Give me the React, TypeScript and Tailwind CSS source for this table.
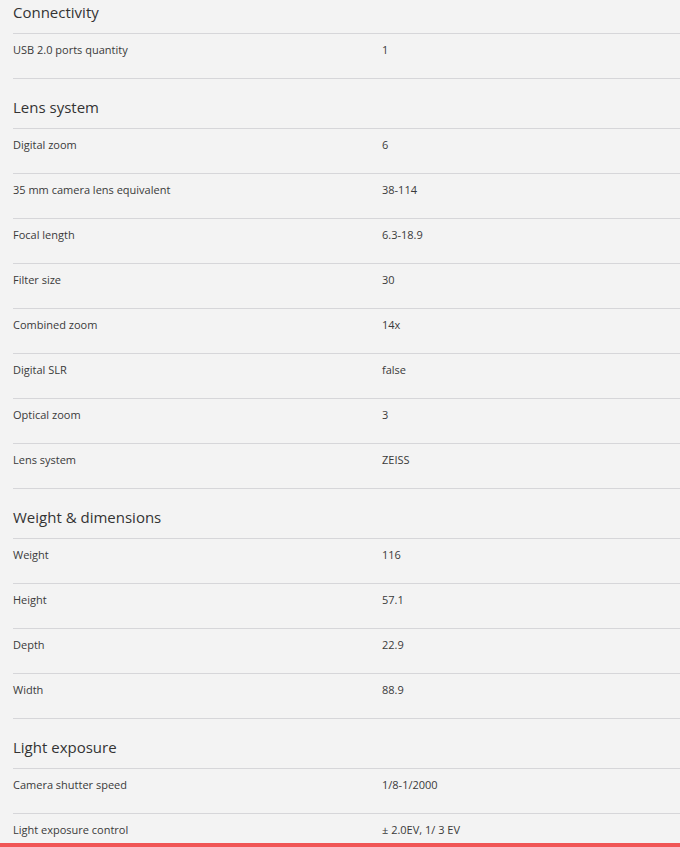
const sections: { title: string; rows: [string, string][] }[] = [
  { title: "Connectivity", rows: [["USB 2.0 ports quantity", "1"]] },
  {
    title: "Lens system",
    rows: [
      ["Digital zoom", "6"],
      ["35 mm camera lens equivalent", "38-114"],
      ["Focal length", "6.3-18.9"],
      ["Filter size", "30"],
      ["Combined zoom", "14x"],
      ["Digital SLR", "false"],
      ["Optical zoom", "3"],
      ["Lens system", "ZEISS"],
    ],
  },
  {
    title: "Weight & dimensions",
    rows: [
      ["Weight", "116"],
      ["Height", "57.1"],
      ["Depth", "22.9"],
      ["Width", "88.9"],
    ],
  },
  {
    title: "Light exposure",
    rows: [
      ["Camera shutter speed", "1/8-1/2000"],
      ["Light exposure control", "± 2.0EV, 1/ 3 EV"],
    ],
  },
]

export default function App() {
  return (
    <div className="min-h-screen bg-[#f3f3f3] overflow-hidden font-['Open_Sans',sans-serif] text-[#333]">
      <div className="-mt-[16px] pl-[13px]">
        {sections.map((s) => (
          <div key={s.title}>
            <h3 className="h-[50px] border-b border-[#d6d6d9] pt-[17px] text-[15px] leading-[22px]">{s.title}</h3>
            {s.rows.map(([label, value]) => (
              <div
                key={label}
                className="grid h-[45px] grid-cols-[369px_1fr] border-b border-[#d6d6d9] pt-[8px] text-[11px] leading-[15px] text-[#3a3a3a]"
              >
                <span>{label}</span>
                <span>{value}</span>
              </div>
            ))}
          </div>
        ))}
      </div>
      <div className="fixed bottom-0 left-0 right-0 h-[4px] bg-[#f05555]" />
    </div>
  )
}
